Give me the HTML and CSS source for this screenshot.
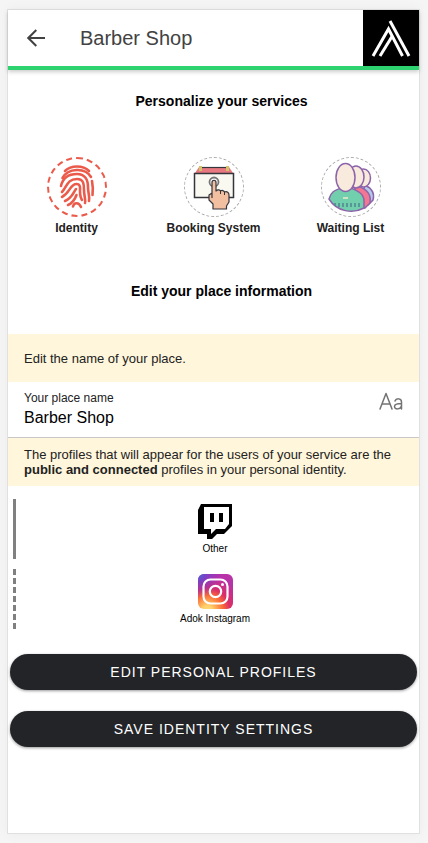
FILE: index.html
```html
<!DOCTYPE html>
<html lang="en">
<head>
    <meta charset="UTF-8">
    <meta name="viewport" content="width=device-width, initial-scale=1.0">
    <title>Barber Shop</title>
    <link rel="stylesheet" href="styles.css">
</head>
<body>

    <div class="page">
      <!-- Header -->
      <header class="toolbar">
        <button class="back-button" type="button" aria-label="Back">
          <svg viewBox="0 0 24 24" width="24" height="24"><path fill="#424242" d="M21 11H6.800l6.200-6.200L11.600 3.200l-8.800 8.800 8.800 8.800 1.400-1.600L6.800 13H21z"/></svg>
        </button>
        <h1 class="toolbar-title">Barber Shop</h1>
        <a class="brand" href="#" aria-label="Home">
          <svg viewBox="0 0 56 56" width="56" height="56">
            <g fill="none" stroke="#fff" stroke-width="3">
              <path d="M10 46 25.500 19 39.500 46"/>
              <path d="M17 46 29 26.500"/>
              <path d="M27 11 46 46"/>
            </g>
          </svg>
        </a>
      </header>

      <main>
        <h2 class="section-title">Personalize your services</h2>

        <!-- Services -->
        <nav class="services">
          <a class="service active" href="#">
            <span class="service-icon">
              <svg viewBox="0 0 60 60" width="60" height="60">
                <g fill="none" stroke="#ea5b4b" stroke-width="2.600" stroke-linecap="round">
                  <path d="M18 14C24 8 36 8 42 14"/>
                  <path d="M15.500 21C21 11 38 10 44 20"/>
                  <path d="M14 29C16 20 22 17 30 17C38 17 41 23 41 30C41 36 43 40 42 44"/>
                  <path d="M45 24C46 29 46 34 45.500 38"/>
                  <path d="M15 35C20 30 20 22 30 22C37 22 37 28 37 33C37 39 39 43 38 46"/>
                  <path d="M15 40C23 36 23 27 29.500 27C34 27 33 32 33 34C33 38 33 40 35 43"/>
                  <path d="M18 44C25 41 26 36 29 32"/>
                  <path d="M21 48C26 46 28 42 29.500 38"/>
                  <path d="M26 49.500C27 45 32 45 34 50"/>
                </g>
              </svg>
            </span>
            Identity
          </a>
          <a class="service" href="#">
            <span class="service-icon">
              <svg viewBox="0 0 60 60" width="60" height="60">
                <path fill="#e97980" d="M15 10H45L49 16H11z"/>
                <path fill="#faf9f1" stroke="#35353c" stroke-width="1.500" d="M10.500 16.500H49.500V40.500H10.500z"/>
                <path fill="none" stroke="#35353c" stroke-width="1.200" d="M15 10.500H45"/>
                <path fill="none" stroke="#d4c26a" stroke-width="3" d="M16.500 9V14M43.500 9V14"/>
                <circle cx="30" cy="25" r="4.500" fill="#fff" stroke="#777" stroke-width="1.800"/>
                <path fill="#f3bfa1" stroke="#35353c" stroke-width="1.200" stroke-linejoin="round" d="M28 41V25.500C28 22.500 32 22.500 32 25.500V34C34 32 36 33 36.500 34C38 33 40 33.500 40.500 35C43 34 45 35.500 45 38V45L42.500 49V52H29V47L25 43V38L28 36"/>
                <path fill="none" stroke="#35353c" d="M36.500 34V37M40.500 35V38"/>
              </svg>
            </span>
            Booking System
          </a>
          <a class="service" href="#">
            <span class="service-icon">
              <svg viewBox="0 0 60 60" width="60" height="60">
                <g stroke="#8d64a9" stroke-width="1.500">
                  <path fill="#b3c9eb" d="M44 28C50 31 54 36 52 43L47 48H38z"/>
                  <ellipse cx="42.500" cy="21" rx="7" ry="9" fill="#f8eadc"/>
                  <path fill="#f37792" d="M34 28C43 31 51 35 49 46L44 51H33z"/>
                  <ellipse cx="35" cy="20" rx="8" ry="11" fill="#f8eadc"/>
                  <path fill="#72cfad" d="M8 42C10 34 15 33 20 31H30C37 34 43 37 43 44V51C32 57 16 55 8 42z"/>
                  <ellipse cx="24.500" cy="20.500" rx="9.500" ry="14" fill="#f8eadc"/>
                </g>
                <path fill="none" stroke="#4f8790" stroke-width="1.500" d="M14 46V49M18 46V50M22 46V50M26 46V50M30 46V50M34 46V50M38 46V50"/>
                <path fill="none" stroke="#f2e9ce" stroke-width="1.500" d="M22 41H27"/>
              </svg>
            </span>
            Waiting List
          </a>
        </nav>

        <h2 class="section-title">Edit your place information</h2>

        <!-- Place form -->
        <form id="identity-form">
          <p class="note">Edit the name of your place.</p>
          <div class="item">
            <div class="item-field">
              <label for="place-name">Your place name</label>
              <input id="place-name" type="text" value="Barber Shop">
            </div>
            <svg class="item-icon" viewBox="0 0 24 24" width="24" height="24">
              <g fill="none" stroke="#737373" stroke-width="1.500" stroke-linecap="round" stroke-linejoin="round">
                <path d="M1 19 7 3.500 13 19M3 14H11"/>
                <path d="M16 11C17 8 22.500 8 22.500 12V19M22.500 13.500C18 13.500 15.500 14 15.500 16.500C15.500 20 21.500 19.500 22.500 16"/>
              </g>
            </svg>
          </div>
          <p class="note">The profiles that will appear for the users of your service are the <b>public and connected</b> profiles in your personal identity.</p>
        </form>

        <!-- Profiles -->
        <ul class="profiles">
          <li class="profile">
            <svg viewBox="0 0 35 35" width="35" height="35">
              <path fill="#000" d="M3 0H34V22L26 30H19L14 35H9V30H0V6z"/>
              <path fill="#fff" d="M6 3H31V20L27 25H18L13 30V25H6z"/>
              <path fill="#000" d="M12 9H16V18H12zM21 9H25V18H21z"/>
            </svg>
            <span>Other</span>
          </li>
          <li class="profile dashed">
            <svg viewBox="0 0 35 35" width="35" height="35">
              <defs>
                <radialGradient id="ig-warm" cx="0.27" cy="1.05" r="1">
                  <stop offset="0" stop-color="#ffdc76"/>
                  <stop offset="0.15" stop-color="#ffd06a"/>
                  <stop offset="0.45" stop-color="#fa6b35"/>
                  <stop offset="0.65" stop-color="#dc2d68"/>
                  <stop offset="1" stop-color="#b832a8"/>
                </radialGradient>
                <radialGradient id="ig-cool" cx="0" cy="0" r="0.7">
                  <stop offset="0" stop-color="#3771d8"/>
                  <stop offset="0.3" stop-color="#6845cf" stop-opacity="0.800"/>
                  <stop offset="1" stop-color="#8a35c8" stop-opacity="0"/>
                </radialGradient>
              </defs>
              <rect width="35" height="35" rx="6" fill="url(#ig-warm)"/>
              <rect width="35" height="35" rx="6" fill="url(#ig-cool)"/>
              <g fill="none" stroke="#fff" stroke-width="2.200">
                <rect x="5.500" y="5.500" width="24" height="24" rx="7"/>
                <circle cx="17.500" cy="17.500" r="5.700"/>
              </g>
              <circle cx="24.500" cy="10.500" r="1.500" fill="#fff"/>
            </svg>
            <span>Adok Instagram</span>
          </li>
        </ul>

        <div class="actions">
          <button class="button" type="button">Edit personal profiles</button>
          <button class="button" type="submit" form="identity-form">Save identity settings</button>
        </div>
      </main>
    </div>

</body>
</html>
```

FILE: styles.css
```css
* {
  box-sizing: border-box;
}

body {
  display: flex;
  min-height: 100vh;
  margin: 0;
  padding: 9px 8px 9px 7px;
  background: #f5f5f5;
  color: #000;
  font-family: "Liberation Sans", Arial, sans-serif;
  font-size: 14px;
}

.page {
  flex: 1;
  min-width: 0;
  background: #fff;
  border: 1px solid #e0e0e0;
  box-shadow: 0 0 12px rgba(0, 0, 0, 0.04);
}

.toolbar {
  display: flex;
  align-items: center;
  border-bottom: 4px solid #2dd36f;
  box-shadow: 0 2px 4px rgba(0, 0, 0, 0.2);
}

.back-button {
  display: flex;
  margin: 0 16px;
  padding: 0;
  border: 0;
  background: none;
  cursor: pointer;
}

.toolbar-title {
  flex: 1;
  margin: 0;
  padding: 0 16px;
  color: #424242;
  font-size: 20px;
  font-weight: 400;
}

.brand {
  display: flex;
  background: #000;
}

.section-title {
  margin: 0;
  padding: 23px 0 0 16px;
  font-size: 14px;
  line-height: 16px;
  text-align: center;
}

.services {
  display: grid;
  grid-template-columns: repeat(3, 1fr);
  padding: 48px 0 25px;
}

.service {
  display: flex;
  flex-direction: column;
  align-items: center;
  gap: 4px;
  color: #222;
  font-size: 12px;
  font-weight: 700;
  line-height: 14px;
  text-decoration: none;
}

.service-icon {
  display: flex;
  align-items: center;
  justify-content: center;
  width: 60px;
  height: 60px;
  border: 1px dashed #aaa;
  border-radius: 50%;
}

.service-icon svg {
  flex: none;
}

.service.active .service-icon {
  border: 2px dashed #ea5b4b;
}

#identity-form {
  margin-top: 35px;
}

.note {
  margin: 0;
  padding: 9px 16px;
  min-height: 48px;
  align-content: center;
  background: #fff6db;
  color: #222;
  font-size: 13px;
  line-height: 15px;
}

.item {
  display: flex;
  align-items: flex-start;
  padding: 8px 16px;
  border-bottom: 1px solid #c8c8c8;
}

.item-field {
  flex: 1;
  display: flex;
  flex-direction: column;
}

.item-field label {
  color: #222;
  font-size: 12px;
  line-height: 16px;
}

.item-field input {
  width: 100%;
  height: 23px;
  padding: 0;
  border: 0;
  outline: 0;
  background: none;
  color: #000;
  font-family: inherit;
  font-size: 16px;
}

.profiles {
  display: flex;
  flex-direction: column;
  gap: 10px;
  margin: 13px 5px 25px;
  padding: 0;
  list-style: none;
}

.profile {
  display: flex;
  flex-direction: column;
  align-items: center;
  gap: 4px;
  height: 60px;
  padding-top: 5px;
  border-left: 3px solid #808080;
  font-size: 10px;
  line-height: 12px;
}

.profile.dashed {
  border-left-style: dashed;
}

.actions {
  display: flex;
  flex-direction: column;
  gap: 21px;
  padding: 0 2px;
}

.button {
  height: 36px;
  border: 0;
  border-radius: 18px;
  background: #222428;
  box-shadow: 0 1px 3px rgba(0, 0, 0, 0.4);
  color: #fff;
  font-family: inherit;
  font-size: 14px;
  font-weight: 500;
  letter-spacing: 1px;
  text-transform: uppercase;
  cursor: pointer;
}
```
